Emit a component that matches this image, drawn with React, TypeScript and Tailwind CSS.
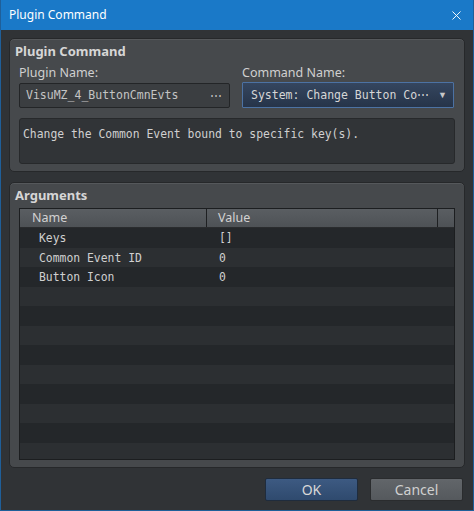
import { X } from 'lucide-react'

const UI_FONT = "font-['Noto_Sans',sans-serif]"
const MONO_FONT = "font-['DejaVu_Sans_Mono',monospace]"

const args = [
  { name: 'Keys', value: '[]' },
  { name: 'Common Event ID', value: '0' },
  { name: 'Button Icon', value: '0' },
]

function Panel({ title, className, children }: { title: string; className?: string; children: React.ReactNode }) {
  return (
    <div
      className={`rounded-[5px] border border-[#26282a] bg-[#46494c] px-[9px] shadow-[inset_0_1px_0_#55585b] ${className ?? ''}`}
    >
      <div className="pt-[3px] h-[25px] text-[13px] font-bold text-[#d6d6d6] leading-[18px] -ml-[4px]">{title}</div>
      {children}
    </div>
  )
}

export default function App() {
  const rows = Array.from({ length: 12 }, (_, i) => args[i])

  return (
    <div className={`w-[474px] h-[511px] flex flex-col bg-[#303336] border-x border-b border-[#1f5f99] ${UI_FONT}`}>
      <div className="h-[30px] shrink-0 bg-[#1a79c8] flex items-center justify-between pl-[8px] pr-[9px]">
        <span className="text-[12px] text-white">Plugin Command</span>
        <X className="w-[15px] h-[15px] text-white" strokeWidth={1.5} />
      </div>

      <div className="flex-1 flex flex-col px-[8px] pt-[8px]">
        <Panel title="Plugin Command" className="h-[134px]">
          <div className="flex gap-[12px]">
            <div className="w-[211px]">
              <div className="text-[12.5px] text-[#d0d0d0] leading-[18px] h-[19px]">Plugin Name:</div>
              <div className="h-[25px] rounded-[2px] border border-[#232527] bg-[#3b3e41] flex items-center justify-between pl-[6px] pr-[7px]">
                <span className={`${MONO_FONT} text-[11.5px] text-[#c4c4c4]`}>VisuMZ_4_ButtonCmnEvts</span>
                <span className="text-[12px] text-[#c4c4c4]">⋯</span>
              </div>
            </div>
            <div className="w-[212px]">
              <div className="text-[12.5px] text-[#d0d0d0] leading-[18px] h-[18px]">Command Name:</div>
              <div className="h-[26px] rounded-[1px] border border-[#4c72a3] bg-gradient-to-b from-[#35465f] to-[#263449] flex items-center justify-between pl-[8px] pr-[6px]">
                <span className={`${MONO_FONT} text-[11.5px] text-[#d6d6d6] whitespace-nowrap`}>
                  System: Change Button Co<span className="font-['Noto_Sans',sans-serif] text-[12px]">⋯</span>
                </span>
                <span className="text-[9px] text-[#c8c8c8]">▼</span>
              </div>
            </div>
          </div>
          <div className="mt-[10px] h-[46px] rounded-[3px] border border-[#27292b] bg-[#313437] px-[3px] pt-[1px]">
            <span className={`${MONO_FONT} text-[11.4px] text-[#d0d0d0] leading-[18px]`}>
              Change the Common Event bound to specific key(s).
            </span>
          </div>
        </Panel>

        <Panel title="Arguments" className="mt-[10px] h-[286px]">
          <div className="h-[252px] border border-[#1c1e20] bg-[#2b2e31] flex flex-col overflow-hidden">
            <div className="h-[19px] shrink-0 flex bg-gradient-to-b from-[#5a5e62] to-[#4e5256] border-b border-[#2a2c2e] text-[12.5px] text-[#d2d2d2] leading-[18px]">
              <div className="w-[187px] pl-[12px] border-r border-[#1e2022]">Name</div>
              <div className="w-[231px] pl-[11px] border-r border-[#1e2022]">Value</div>
              <div className="flex-1" />
            </div>
            {rows.map((row, i) => (
              <div
                key={i}
                className={`h-[19.5px] shrink-0 flex items-center pt-[2px] ${MONO_FONT} text-[11.4px] text-[#d0d0d0] ${
                  i % 2 === 0 ? 'bg-[#24272a]' : 'bg-[#2c2f32]'
                }`}
              >
                {row && (
                  <>
                    <div className="w-[187px] pl-[19px]">{row.name}</div>
                    <div className="pl-[12px]">{row.value}</div>
                  </>
                )}
              </div>
            ))}
          </div>
        </Panel>

        <div className="flex justify-end gap-[12px] mt-[10px] pr-[2px]">
          <button
            type="button"
            className="w-[93px] h-[23px] rounded-[2px] border border-[#1f2c3d] bg-gradient-to-b from-[#3d5a82] to-[#2f4a6e] text-[14px] text-[#d8d8d8] leading-none"
          >
            OK
          </button>
          <button
            type="button"
            className="w-[93px] h-[23px] rounded-[2px] border border-[#2a2c2e] bg-gradient-to-b from-[#62666a] to-[#55595d] text-[14px] text-[#d0d0d0] leading-none"
          >
            Cancel
          </button>
        </div>
      </div>
    </div>
  )
}
